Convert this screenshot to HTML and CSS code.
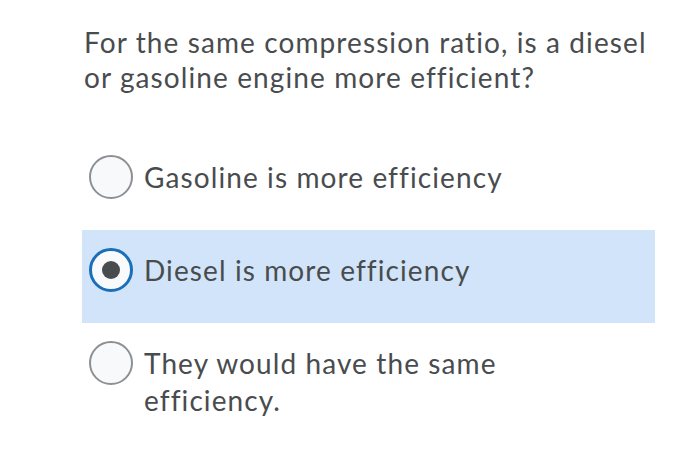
FILE: index.html
```html
<!DOCTYPE html>
<html lang="en">
<head>
<meta charset="utf-8">
<title>Question</title>
<link rel="stylesheet" href="styles.css">
</head>
<body>
<main class="quiz">
  <p class="question">For the same compression ratio, is a diesel or gasoline engine more efficient?</p>
  <ul class="options">
    <li class="option">
      <span class="radio"></span>
      <span class="label">Gasoline is more efficiency</span>
    </li>
    <li class="option selected">
      <span class="radio"><span class="dot"></span></span>
      <span class="label">Diesel is more efficiency</span>
    </li>
    <li class="option">
      <span class="radio"></span>
      <span class="label">They would have the same efficiency.</span>
    </li>
  </ul>
</main>
</body>
</html>
```

FILE: styles.css
```css
html, body {
  margin: 0;
  padding: 0;
  background: #ffffff;
}

body {
  font-family: Lato, "Noto Sans", "Liberation Sans", sans-serif;
  color: #494c4e;
  font-size: 28px;
  letter-spacing: 1.1px;
  font-variant-ligatures: common-ligatures;
}

.quiz {
  padding: 25px 0 0 82px;
  width: 573px;
}

.question {
  margin: 0 0 0 2px;
  line-height: 35px;
  width: 570px;
}

.options {
  list-style: none;
  margin: 42px 0 0 0;
  padding: 0;
}

.option {
  display: flex;
  align-items: flex-start;
  gap: 11px;
  min-height: 93px;
  box-sizing: border-box;
  padding: 18px 0 0 7px;
}

.option.selected {
  background: #d2e4f9;
}

.radio {
  flex: none;
  width: 44px;
  height: 44px;
  box-sizing: border-box;
  border: 2px solid #8d9092;
  border-radius: 50%;
  background: #f8f9fb;
  display: flex;
  align-items: center;
  justify-content: center;
}

.selected .radio {
  border: 3px solid #1b6fb8;
  background: #f9fafc;
}

.dot {
  width: 18px;
  height: 18px;
  border-radius: 50%;
  background: #494c4e;
}

.label {
  padding-top: 4px;
  line-height: 37px;
  max-width: 430px;
}
```
